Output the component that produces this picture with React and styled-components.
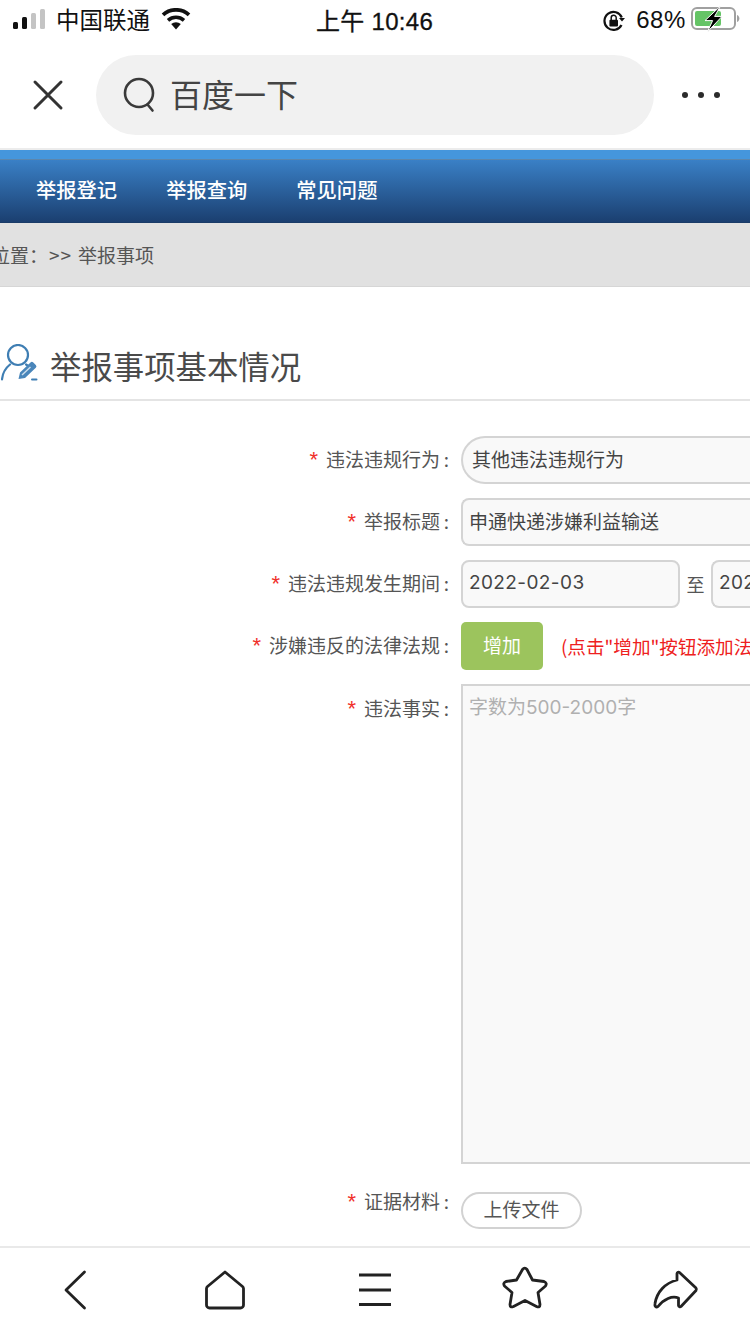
import React from "react";
import styled, { createGlobalStyle } from "styled-components";

const GlobalStyle = createGlobalStyle`
  html, body {
    margin: 0;
    padding: 0;
    background: #fff;
    overflow: hidden;
  }
  * { box-sizing: border-box; }
`;

const FONT = `"Noto Sans CJK SC", "Noto Sans", sans-serif`;
const UI_FONT = `"Liberation Sans", "Noto Sans CJK SC", sans-serif`;
const FIELD_FONT = `"Inter", "Noto Sans CJK SC", sans-serif`;

const Screen = styled.div`
  width: 750px;
  height: 1334px;
  display: flex;
  flex-direction: column;
  overflow: hidden;
  font-family: ${FONT};
  background: #fff;
`;

const StatusBar = styled.div`
  height: 40px;
  flex: none;
  display: grid;
  grid-template-columns: 1fr auto 1fr;
  align-items: center;
  padding: 0 10px 2px 13px;
  color: #111;
  font-size: 23.5px;
`;

const StatusLeft = styled.div`
  display: flex;
  align-items: center;
  gap: 11px;
`;

const StatusRight = styled.div`
  display: flex;
  align-items: center;
  justify-content: flex-end;
  gap: 5px;
`;

const Clock = styled.div`
  margin-right: 4px;
  font-size: 24px;
  font-family: ${UI_FONT};
  letter-spacing: 0.3px;
  -webkit-text-stroke: 0.3px #111;
`;

const Percent = styled.span`
  margin: 2px 0 0 6px;
  font-family: ${UI_FONT};
  font-size: 24px;
  letter-spacing: 0.6px;
`;

const LockWrap = styled.span`
  display: flex;
  margin-top: 4px;
`;

const AddressBar = styled.div`
  height: 110px;
  flex: none;
  display: flex;
  align-items: center;
  padding: 2px 30px 0 32px;
  border-bottom: 2px solid #ececec;
`;

const CloseButton = styled.div`
  width: 32px;
  height: 32px;
  margin-right: 32px;
  display: flex;
  color: #333;
`;

const SearchPill = styled.div`
  width: 558px;
  height: 80px;
  border-radius: 40px;
  background: #f1f1f1;
  display: flex;
  align-items: center;
  padding-left: 27px;
  gap: 13px;
  color: #444;
  font-size: 32px;
`;

const SearchText = styled.span`
  padding-bottom: 4px;
`;

const MoreDots = styled.div`
  margin-left: auto;
  display: flex;
  gap: 10px;
`;

const Dot = styled.span`
  width: 6px;
  height: 6px;
  border-radius: 50%;
  background: #2b2b2b;
`;

const Content = styled.div`
  flex: 1;
  min-height: 0;
  overflow: hidden;
`;

const NavStripe = styled.div`
  height: 10px;
  background: #4596dc;
  border-bottom: 1px solid #5c86ac;
`;

const Nav = styled.nav`
  height: 63px;
  display: flex;
  align-items: center;
  gap: 49px;
  padding: 0 0 4px 36px;
  background: linear-gradient(#3a80c6, #1b3f70);
  border-bottom: 1px solid #1a3c68;
`;

const NavItem = styled.a`
  color: #fff;
  font-size: 20.3px;
  font-weight: 500;
`;

const Breadcrumb = styled.div`
  height: 64px;
  display: flex;
  align-items: center;
  padding-bottom: 1px;
  background: #e1e1e1;
  border-bottom: 1px solid #d6d6d6;
  color: #555;
  font-size: 19px;
`;

const Crumb = styled.span`
  margin-left: -9px;
`;

const CrumbArrows = styled.span`
  margin: 0 6px 0 1px;
  letter-spacing: 1px;
`;

const SectionTitle = styled.h2`
  height: 114px;
  margin: 0;
  padding: 44px 0 0 1px;
  display: flex;
  align-items: center;
  gap: 11px;
  border-bottom: 2px solid #e4e4e4;
  color: #4a4a4a;
  font-size: 31.4px;
  font-weight: 400;
`;

const IconWrap = styled.span`
  display: flex;
  margin-top: -4px;
`;

const Form = styled.form`
  padding-top: 35px;
  display: flex;
  flex-direction: column;
  gap: 14px;
`;

const Row = styled.div`
  display: grid;
  grid-template-columns: 461px 1fr;
  align-items: ${(p) => (p.$top ? "start" : "center")};
`;

const Label = styled.label`
  display: flex;
  justify-content: flex-end;
  align-items: center;
  gap: 8px;
  padding-right: 11px;
  margin-top: ${(p) => p.$offset ?? -3}px;
  color: #555;
  font-size: 19px;
  line-height: 28px;
  white-space: nowrap;
`;

const Colon = styled.span`
  display: inline-block;
  width: 10px;
  text-align: right;
  padding-right: 1px;
`;

const Star = styled.span`
  color: #f0302a;
  font-family: ${UI_FONT};
  font-size: 22px;
  line-height: 22px;
  margin-top: 2px;
`;

const Controls = styled.div`
  display: flex;
  align-items: center;
  width: 700px;
`;

const Input = styled.input`
  width: ${(p) => p.$width || 500}px;
  height: 48px;
  flex: none;
  padding: 0 6px 3px ${(p) => p.$pad || 6}px;
  border: 2px solid #d4d4d4;
  border-right-width: ${(p) => (p.$closed ? 2 : 0)}px;
  border-radius: ${(p) => (p.$closed ? "8px" : `${p.$radius || 8}px 0 0 ${p.$radius || 8}px`)};
  background: #f9f9f9;
  color: #444;
  font-family: ${FIELD_FONT};
  font-size: 19px;
  letter-spacing: ${(p) => (p.$date ? "0.4px" : "0")};
  outline: none;
`;

const Until = styled.span`
  width: 31px;
  flex: none;
  text-align: center;
  color: #555;
  font-size: 18px;
`;

const AddButton = styled.button`
  width: 82px;
  height: 48px;
  flex: none;
  border: 0;
  border-radius: 5px;
  padding: 0 0 4px;
  background: #9cc45d;
  color: #fff;
  font-family: ${FONT};
  font-size: 19px;
`;

const Hint = styled.span`
  margin-left: 18px;
  padding-bottom: 2px;
  color: #ee2020;
  font-size: 18.6px;
  white-space: nowrap;
`;

const FactsArea = styled.textarea`
  display: block;
  width: 500px;
  height: 480px;
  padding: 8px 6px;
  border: 2px solid #d4d4d4;
  border-right: 0;
  background: #f9f9f9;
  font-family: ${FIELD_FONT};
  font-size: 19px;
  line-height: 28px;
  resize: none;
  outline: none;
  &::placeholder {
    color: #b0b0b0;
    opacity: 1;
  }
`;

const UploadButton = styled.button`
  width: 121px;
  height: 37px;
  padding: 0 0 4px;
  border: 2px solid #d2d2d2;
  border-radius: 19px;
  background: #fff;
  color: #555;
  font-family: ${FONT};
  font-size: 19px;
  line-height: 1;
`;

const UploadRow = styled(Row)`
  margin-top: 14px;
`;

const BottomBar = styled.div`
  height: 88px;
  flex: none;
  display: grid;
  grid-template-columns: repeat(5, 1fr);
  place-items: center;
  border-top: 2px solid #e9e9e9;
`;

const BarButton = styled.div`
  display: flex;
  width: 50px;
  height: 50px;
  color: #222;
`;

const SignalIcon = () => (
  <svg width="32" height="20" viewBox="0 0 32 20">
    <rect x="0" y="13" width="5" height="7" rx="1.5" fill="#111" />
    <rect x="9" y="8" width="5" height="12" rx="1.5" fill="#111" />
    <rect x="18" y="4" width="5" height="16" rx="1.5" fill="#c4c4c4" />
    <rect x="27" y="0" width="5" height="20" rx="1.5" fill="#c4c4c4" />
  </svg>
);

const WifiIcon = () => (
  <svg width="30" height="22" viewBox="0 0 30 22">
    <path d="M15 21.5 10.2 16a7.400 7.400 0 0 1 9.600 0Z" fill="#111" />
    <path d="M7 12.300a12.200 12.200 0 0 1 16 0" fill="none" stroke="#111" strokeWidth="3.6" />
    <path d="M2 6.800a19.500 19.500 0 0 1 26 0" fill="none" stroke="#111" strokeWidth="3.8" />
  </svg>
);

const RotationLockIcon = () => (
  <svg width="22" height="22" viewBox="0 0 22 22">
    <path d="M18.500 15A9 9 0 1 1 18.800 7.500" fill="none" stroke="#111" strokeWidth="2.2" />
    <path d="M16 8h6l-3 3.600Z" fill="#111" />
    <rect x="6.400" y="9.800" width="8.600" height="6.600" rx="1" fill="#111" />
    <path d="M8.200 10V7.800a2.500 2.500 0 0 1 5 0V10" fill="none" stroke="#111" strokeWidth="1.5" />
  </svg>
);

const BatteryIcon = () => (
  <svg width="49" height="26" viewBox="0 0 49 26">
    <rect x="1" y="2" width="43" height="21" rx="5" fill="none" stroke="#a0a0a0" strokeWidth="2" />
    <rect x="4" y="5" width="26" height="15" rx="2" fill="#65c466" />
    <path d="M46 9c1.600.6 2.400 2 2.400 3.500S47.600 15.400 46 16Z" fill="#a0a0a0" />
    <path d="M29.500 0 14 14.600h7.600L16.400 26 31 10.400h-7.400Z" fill="#000" stroke="#fff" strokeWidth="1" />
  </svg>
);

const CloseIcon = () => (
  <svg width="32" height="32" viewBox="0 0 32 32">
    <path d="M3 3 29 29M29 3 3 29" fill="none" stroke="currentColor" strokeWidth="3" strokeLinecap="round" />
  </svg>
);

const SearchIcon = () => (
  <svg width="34" height="36" viewBox="0 0 34 36">
    <circle cx="16" cy="16" r="14" fill="none" stroke="#3a3a3a" strokeWidth="2.6" />
    <path d="M24.500 27.500 29.500 33.500" fill="none" stroke="#3a3a3a" strokeWidth="2.6" strokeLinecap="round" />
  </svg>
);

const ReporterIcon = () => (
  <svg width="38" height="38" viewBox="0 0 38 38">
    <circle cx="17" cy="11" r="10" fill="none" stroke="#3f7eb3" strokeWidth="2.2" />
    <path d="M9 20.500C4 24.500 1.500 29.500 1 35.500" fill="none" stroke="#3f7eb3" strokeWidth="2.2" strokeLinecap="round" />
    <path d="M25 20.500l3 2" fill="none" stroke="#3f7eb3" strokeWidth="2.2" strokeLinecap="round" />
    <path d="M17.500 35 19 28.500 29.500 18.500a2 2 0 0 1 2.800 0l2.500 2.500a2 2 0 0 1 0 2.800L24 34Z" fill="#4a86ba" />
    <path d="M21 31 29.500 23" stroke="#cfe0ee" strokeWidth="1.4" />
    <path d="M31 35.500h4.500" stroke="#3f7eb3" strokeWidth="2" strokeLinecap="round" />
  </svg>
);

const barStroke = { fill: "none", stroke: "currentColor", strokeWidth: 2.8, strokeLinecap: "round", strokeLinejoin: "round" };

const BackIcon = () => (
  <svg width="50" height="50" viewBox="0 0 50 50">
    <path d="M34.500 6 16 24l18.500 18" {...barStroke} />
  </svg>
);

const HomeIcon = () => (
  <svg width="50" height="50" viewBox="0 0 50 50">
    <path d="M25 6 42.500 20.500a3 3 0 0 1 1 2V39a3 3 0 0 1-3 3H9.500a3 3 0 0 1-3-3V22.500a3 3 0 0 1 1-2Z" {...barStroke} />
  </svg>
);

const MenuIcon = () => (
  <svg width="50" height="50" viewBox="0 0 50 50">
    <path d="M9 9h32M9 24h32M9 38.500h32" fill="none" stroke="currentColor" strokeWidth="2.8" />
  </svg>
);

const StarIcon = () => (
  <svg width="50" height="50" viewBox="0 0 50 50">
    <path d="M16.500 14 22.500 3.500Q24.700.800 27 3.500L32.500 14 44 15.500Q47.500 17 45.500 20L38 26.500 40 38.500Q40 42 36.500 40.500L25 34.500 13.500 40.500Q10 42 10 38.500L12 26.500 4.500 20Q2.500 17 6 15.500Z" {...barStroke} />
  </svg>
);

const ShareIcon = () => (
  <svg width="50" height="50" viewBox="0 0 50 50">
    <path d="M27 7.500a1.500 1.500 0 0 1 2.500-1L46 22a2 2 0 0 1 0 2.500L31 40.500a1.500 1.500 0 0 1-2.500-1L28.500 32C22 29.500 14 33 8 40.500 6 42 4.500 40 5 37.500 7 26 15 17 27 14Z" {...barStroke} />
  </svg>
);

const FormRow = ({ label, offset, top, children }) => (
  <Row $top={top}>
    <Label $offset={offset}>
      <Star>*</Star>
      <span>
        {label}
        <Colon>:</Colon>
      </span>
    </Label>
    <Controls>{children}</Controls>
  </Row>
);

export default function App() {
  return (
    <Screen>
      <GlobalStyle />
      <StatusBar>
        <StatusLeft>
          <SignalIcon />
          <span>中国联通</span>
          <WifiIcon />
        </StatusLeft>
        <Clock>上午 10:46</Clock>
        <StatusRight>
          <LockWrap>
            <RotationLockIcon />
          </LockWrap>
          <Percent>68%</Percent>
          <BatteryIcon />
        </StatusRight>
      </StatusBar>

      <AddressBar>
        <CloseButton>
          <CloseIcon />
        </CloseButton>
        <SearchPill>
          <SearchIcon />
          <SearchText>百度一下</SearchText>
        </SearchPill>
        <MoreDots>
          <Dot />
          <Dot />
          <Dot />
        </MoreDots>
      </AddressBar>

      <Content>
        <NavStripe />
        <Nav>
          <NavItem>举报登记</NavItem>
          <NavItem>举报查询</NavItem>
          <NavItem>常见问题</NavItem>
        </Nav>
        <Breadcrumb>
          <Crumb>位置：</Crumb>
          <CrumbArrows>&gt;&gt;</CrumbArrows>
          <span>举报事项</span>
        </Breadcrumb>
        <SectionTitle>
          <IconWrap>
            <ReporterIcon />
          </IconWrap>
          <span>举报事项基本情况</span>
        </SectionTitle>

        <Form>
          <FormRow label="违法违规行为">
            <Input $radius={24} $pad={9} readOnly value="其他违法违规行为" />
          </FormRow>
          <FormRow label="举报标题">
            <Input readOnly value="申通快递涉嫌利益输送" />
          </FormRow>
          <FormRow label="违法违规发生期间">
            <Input $width={219} $closed $date readOnly value="2022-02-03" />
            <Until>至</Until>
            <Input $date readOnly value="2022-02-03" />
          </FormRow>
          <FormRow label="涉嫌违反的法律法规">
            <AddButton type="button">增加</AddButton>
            <Hint>(点击"增加"按钮添加法律法规)</Hint>
          </FormRow>
          <FormRow label="违法事实" top offset={10}>
            <FactsArea placeholder="字数为500-2000字" />
          </FormRow>
          <UploadRow $top>
            <Label $offset={-5}>
              <Star>*</Star>
              <span>
                证据材料
                <Colon>:</Colon>
              </span>
            </Label>
            <Controls>
              <UploadButton type="button">上传文件</UploadButton>
            </Controls>
          </UploadRow>
        </Form>
      </Content>

      <BottomBar>
        <BarButton>
          <BackIcon />
        </BarButton>
        <BarButton>
          <HomeIcon />
        </BarButton>
        <BarButton>
          <MenuIcon />
        </BarButton>
        <BarButton>
          <StarIcon />
        </BarButton>
        <BarButton>
          <ShareIcon />
        </BarButton>
      </BottomBar>
    </Screen>
  );
}
